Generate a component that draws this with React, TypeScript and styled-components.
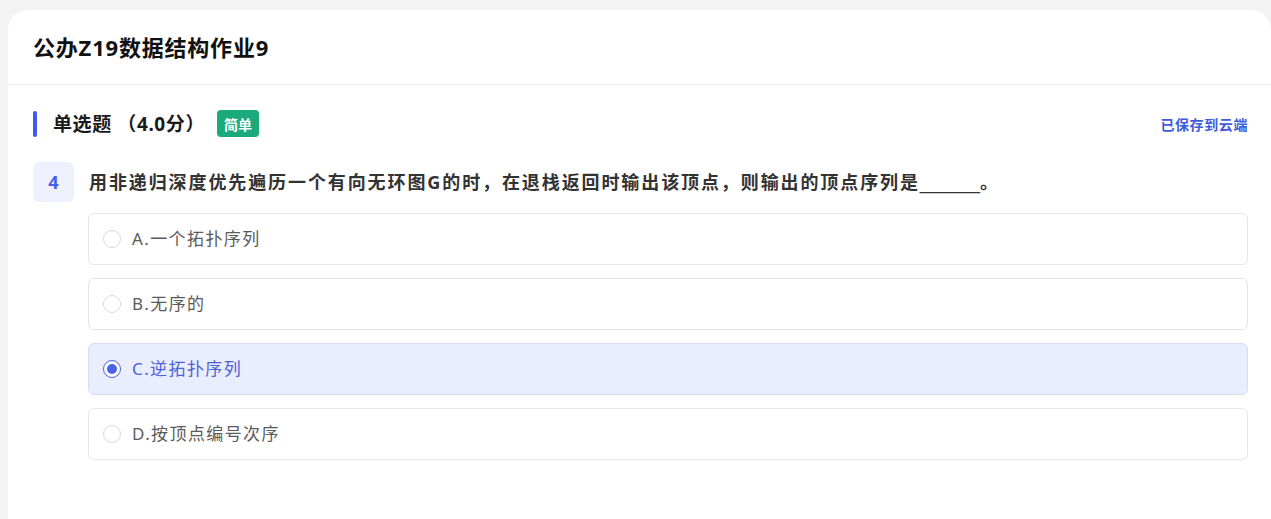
import React, { useState } from "react";
import styled, { createGlobalStyle } from "styled-components";

const GlobalStyle = createGlobalStyle`
  html, body {
    margin: 0;
    padding: 0;
    background: #f3f3f3;
    font-family: "Noto Sans", "Noto Sans CJK SC", sans-serif;
  }
`;

const Page = styled.div`
  padding: 10px 0 0 8px;
  height: 509px;
  overflow: hidden;
`;

const Card = styled.div`
  background: #fff;
  border-radius: 20px 20px 0 0;
  height: 100%;
`;

const Header = styled.div`
  height: 74px;
  display: flex;
  align-items: center;
  padding: 0 25px;
  border-bottom: 1px solid #ececec;
`;

const Title = styled.h1`
  margin: 0 0 2px;
  font-size: 22px;
  font-weight: 700;
  color: #111;
  letter-spacing: 0.8px;
`;

const Body = styled.div`
  padding: 25px 23px 0 25px;
`;

const SectionRow = styled.div`
  display: flex;
  align-items: center;
  height: 27px;
`;

const Bar = styled.span`
  width: 4px;
  height: 26px;
  border-radius: 2px;
  background: #3e5ce8;
  margin-right: 16px;
`;

const SectionTitle = styled.span`
  font-size: 19px;
  font-weight: 700;
  color: #1a1a1a;
  letter-spacing: 0.6px;
  margin-top: -2px;
`;

const Tag = styled.span`
  margin-left: 12px;
  height: 27px;
  padding: 0 7px;
  border-radius: 4px;
  background: #1aaa7c;
  color: #fff;
  font-size: 14px;
  font-weight: 700;
  display: flex;
  align-items: center;
`;

const Saved = styled.span`
  margin-left: auto;
  font-size: 14px;
  font-weight: 700;
  color: #3f5bdc;
  letter-spacing: 0.6px;
`;

const QuestionRow = styled.div`
  display: flex;
  align-items: center;
  margin-top: 25px;
`;

const Num = styled.div`
  width: 41px;
  height: 40px;
  border-radius: 6px;
  background: #eef0fd;
  color: #4560e6;
  font-size: 18px;
  font-weight: 700;
  display: flex;
  align-items: center;
  justify-content: center;
  flex-shrink: 0;
`;

const Stem = styled.div`
  margin: -2px 0 0 15px;
  font-size: 18px;
  font-weight: 700;
  color: #333;
  letter-spacing: 1.9px;
`;

const Blank = styled.span`
  letter-spacing: 0;
  font-family: "Liberation Sans", sans-serif;
  font-weight: 400;
`;

const Options = styled.div`
  margin: 11px 0 0 55px;
  display: flex;
  flex-direction: column;
  gap: 13px;
`;

const Option = styled.div<{ $active: boolean }>`
  height: 52px;
  box-sizing: border-box;
  border: 1px solid ${(p) => (p.$active ? "#d5dcfa" : "#e6e6e6")};
  background: ${(p) => (p.$active ? "#e9edfd" : "#fff")};
  border-radius: 6px;
  display: flex;
  align-items: center;
  padding-left: 14px;
  cursor: pointer;
`;

const Radio = styled.span<{ $active: boolean }>`
  width: 18px;
  height: 18px;
  box-sizing: border-box;
  border-radius: 50%;
  border: 1px solid ${(p) => (p.$active ? "#4a63e6" : "#d9d9d9")};
  background: #fff;
  display: flex;
  align-items: center;
  justify-content: center;
  &::after {
    content: "";
    width: 10px;
    height: 10px;
    border-radius: 50%;
    background: ${(p) => (p.$active ? "#4a63e6" : "transparent")};
  }
`;

const OptionText = styled.span<{ $active: boolean }>`
  margin: -3px 0 0 11px;
  font-size: 17px;
  color: ${(p) => (p.$active ? "#4d62d9" : "#5a5a5a")};
  letter-spacing: 1.4px;
`;

const options = ["A.一个拓扑序列", "B.无序的", "C.逆拓扑序列", "D.按顶点编号次序"];

export default function App() {
  const [picked, setPicked] = useState(2);
  return (
    <>
      <GlobalStyle />
      <Page>
        <Card>
          <Header>
            <Title>公办Z19数据结构作业9</Title>
          </Header>
          <Body>
            <SectionRow>
              <Bar />
              <SectionTitle>单选题 （4.0分）</SectionTitle>
              <Tag>简单</Tag>
              <Saved>已保存到云端</Saved>
            </SectionRow>
            <QuestionRow>
              <Num>4</Num>
              <Stem>
                用非递归深度优先遍历一个有向无环图G的时，在退栈返回时输出该顶点，则输出的顶点序列是
                <Blank>______</Blank>。
              </Stem>
            </QuestionRow>
            <Options>
              {options.map((o, i) => (
                <Option key={o} $active={picked === i} onClick={() => setPicked(i)}>
                  <Radio $active={picked === i} />
                  <OptionText $active={picked === i}>{o}</OptionText>
                </Option>
              ))}
            </Options>
          </Body>
        </Card>
      </Page>
    </>
  );
}
